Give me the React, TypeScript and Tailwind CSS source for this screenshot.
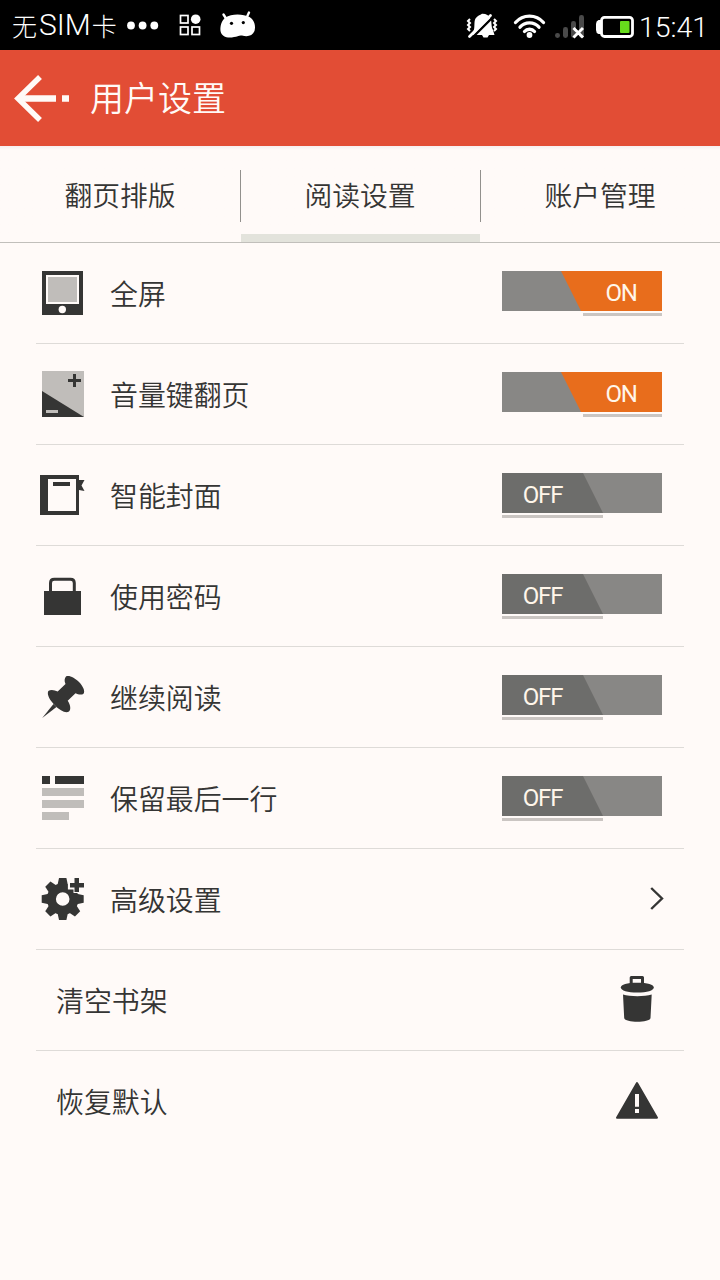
import type { ReactNode } from "react";

const DARK = "#353534";
const GREY = "#c0bdba";

function StatusBar() {
  return (
    <div className="flex h-[50px] items-center bg-black text-white">
      <div className="flex items-center pl-[12px]">
        <span className="text-[25px] leading-[48px] font-light">无</span>
        <span className="pl-[2px] font-[Roboto] text-[30px] leading-[50px] font-light">SIM</span>
        <span className="pl-px text-[25px] leading-[48px] font-light">卡</span>
      </div>
      <svg className="ml-auto h-[50px] w-[600px] shrink-0" viewBox="120 0 600 50" fill="#fff">
        <circle cx="131" cy="25.5" r="3.9" />
        <circle cx="142.6" cy="25.5" r="3.9" />
        <circle cx="154.3" cy="25.5" r="3.9" />

        {/* app grid */}
        <g fill="none" stroke="#fff" strokeWidth="1.7">
          <rect x="180.5" y="15.5" width="7.5" height="7.5" />
          <rect x="180.5" y="27" width="7.5" height="7.5" />
          <rect x="192" y="27" width="7.5" height="7.5" />
        </g>
        <circle cx="195.7" cy="19.2" r="4.8" />

        {/* android head */}
        <path d="M223.5 14.5L227 20M249 12.5L246 19" stroke="#fff" strokeWidth="2.4" strokeLinecap="round" />
        <path d="M225.5 17.5C231 13.5 243 13.5 249.5 17C254.5 20 256 26 254.5 31C252.5 36 247.5 37 242 35.5C239 35 237.5 36.5 234 37C228 38.5 221.5 37 220.5 31C220 26 221.5 20.5 225.5 17.5Z" />
        <circle cx="231.5" cy="23.3" r="1.6" fill="#000" />
        <circle cx="243.3" cy="22.6" r="1.6" fill="#000" />

        {/* muted bell */}
        <path d="M473 32C475.5 28 473.5 22 475.5 18.5C477.5 15.5 480 15 482 13.7C486 13.5 489 15.5 490.5 18.5C492 22 491 27 493 30L494.5 35H489L487.5 37.5H483.500L482 35H471Z" />
        <path d="M470.5 39.5L494.5 15.5" stroke="#000" strokeWidth="2.4" />
        <path d="M469.5 36.5L490.5 15.5" stroke="#fff" strokeWidth="2.8" strokeLinecap="round" />
        <path d="M470 19l-2 2 2 2-2 2 2 2-2 2 2 2M494 19l2 2-2 2 2 2-2 2 2 2-2 2" fill="none" stroke="#fff" strokeWidth="2" />

        {/* wifi */}
        <g fill="none" stroke="#fff" strokeWidth="3.3" strokeLinecap="round">
          <path d="M515.5 22.5C523 14 536 14 543.5 22.5" />
          <path d="M520 27.2C525 21.5 534 21.5 539 27.2" />
          <path d="M524.5 31.5C527 28.5 532 28.5 534.5 31.5" />
        </g>
        <circle cx="529.5" cy="35" r="2.9" />

        {/* signal */}
        <g fill="#4a4a4a">
          <rect x="555" y="33" width="5" height="5" rx="2.4" />
          <rect x="563" y="27" width="5" height="11" rx="2.4" />
          <rect x="571" y="21" width="5" height="17" rx="2.4" />
          <rect x="579" y="15" width="5" height="23" rx="2.4" />
        </g>
        <path d="M573.5 28L583 37.5M583 28L573.5 37.5" stroke="#fff" strokeWidth="2.9" />

        {/* battery */}
        <rect x="601.5" y="17.3" width="31" height="19.2" rx="3" fill="#000" stroke="#fff" strokeWidth="2.8" />
        <path d="M601 20H598.5Q596 21 596 24V30Q596 33 598.5 34H601Z" />
        <rect x="620" y="21" width="9.5" height="12" rx="1" fill="#67db1c" />

        <text x="639" y="37" className="font-[Roboto] text-[28.5px] font-light" textLength="69">
          15:41
        </text>
      </svg>
    </div>
  );
}

function Header() {
  return (
    <header className="flex h-[96px] items-center bg-[#e24d35] text-[#fffaf7]">
      <svg className="ml-[12px] h-[56px] w-[60px]" viewBox="12 70 60 56">
        <path d="M40 77L18 98.5L40 120" fill="none" stroke="#fffaf7" strokeWidth="5.5" />
        <path d="M18 95.2H56V101.8H18ZM62 95.2H69V101.8H62Z" fill="#fffaf7" />
      </svg>
      <h1 className="mb-[3px] ml-[18px] text-[34px] leading-[48px] font-[350]">用户设置</h1>
    </header>
  );
}

const tabs = ["翻页排版", "阅读设置", "账户管理"];

function Tabs() {
  return (
    <nav className="grid h-[97px] grid-cols-3 border-b border-[#c1bfbb] bg-gradient-to-b from-[#f6eef0] to-[#fffaf8] to-[4px]">
      {tabs.map((tab, i) => (
        <div key={tab} className="flex flex-col">
          <div
            className={`mt-[24px] flex h-[52px] items-center justify-center border-l pr-px pb-[4px] text-[27.8px] ${
              i > 0 ? "border-[#92908d]" : "border-transparent"
            }`}
          >
            <span className="leading-[48px]">{tab}</span>
          </div>
          {i === 1 && <div className="mt-auto ml-px h-[8px] bg-[#e3e3dc]" />}
        </div>
      ))}
    </nav>
  );
}

function Toggle({ on }: { on?: boolean }) {
  return (
    <div className="mt-[28px] w-[160px] self-start font-[Roboto] text-[24px] font-normal tracking-[-1.2px] text-[#fff6ea]">
      <div className="h-[40px] bg-[#888785]">
        {on ? (
          <div className="ml-auto flex h-full w-[101px] items-center justify-center bg-[#e86d1c] pt-[4px] pl-[19px] [clip-path:polygon(0_0,100%_0,100%_100%,20px_100%)]">
            ON
          </div>
        ) : (
          <div className="flex h-full w-[101px] items-center justify-center bg-[#6d6d6b] pt-[4px] pr-[20px] [clip-path:polygon(0_0,81px_0,100%_100%,0_100%)]">
            OFF
          </div>
        )}
      </div>
      <div className={on ? "mt-[2px] ml-auto h-[3px] w-[79px] bg-[#cac5c2]" : "mt-[2px] h-[3px] w-[101px] bg-[#cac5c2]"} />
    </div>
  );
}

function Icon({ children }: { children: ReactNode }) {
  return (
    <svg className="h-[52px] w-[52px] shrink-0" viewBox="0 0 52 52" fill={DARK}>
      {children}
    </svg>
  );
}

const TabletIcon = (
  <Icon>
    <path d="M6 4H47V48H6Z" />
    <path d="M10 8H43V37H10Z" fill="#fffaf8" />
    <path d="M12 10H41V35H12Z" fill={GREY} />
    <circle cx="26.3" cy="42.5" r="3.7" fill="#fffaf8" />
  </Icon>
);

const VolumeIcon = (
  <Icon>
    <path d="M6 3H48V49H6Z" fill={GREY} />
    <path d="M6 23L48 49H6Z" />
    <path d="M37 6H40V11H45V14H40V19H37V14H32V11H37Z" />
    <path d="M10 42H22V45H10Z" fill={GREY} />
  </Icon>
);

const CoverIcon = (
  <Icon>
    <path d="M4 6H43V46H4Z" />
    <path d="M12 10H40V42H12Z" fill="#fffaf8" />
    <path d="M17 13H34V17H17Z" />
    <path d="M43 11H48.5L45.5 16.5L48.5 22L43 21Z" />
  </Icon>
);

const LockIcon = (
  <Icon>
    <path d="M8 21H45V45H8Z" />
    <path d="M14.5 22V13Q14.5 9.2 18.3 9.2H34.5Q38.3 9.2 38.3 13V22" fill="none" stroke={DARK} strokeWidth="3" />
  </Icon>
);

const PinIcon = (
  <Icon>
    <path d="M6.2 47L17.5 33L20.5 36Z" />
    <path d="M12.3 20C15 18 18.500 19 21.700 20.500L29.500 13C28 10 28.500 7 30 5.500C33 3.800 39 7 43 11C47 15 49.500 20.500 47.500 22.800C45.500 24.300 42 23.500 39.500 22.300L31.700 29.700C34 33 35.500 38 33 40.500C29.500 42.500 24 39.500 19 34.500C14 29.500 10.500 23.500 12.300 20Z" />
  </Icon>
);

const LinesIcon = (
  <Icon>
    <path d="M6 4H14V12H6ZM19 4H48V12H19Z" />
    <path d="M6 16H48V24H6ZM6 28H48V36H6ZM6 40H33V48H6Z" fill={GREY} />
  </Icon>
);

const GearIcon = (
  <Icon>
    <circle cx="26.7" cy="26" r="11.3" fill="none" stroke={DARK} strokeWidth="9" />
    {[0, 90, 135, 180, 225, 270, 315].map((angle) => (
      <path key={angle} d="M21.5 12L23 5H30.400L31.900 12Z" transform={`rotate(${angle} 26.7 26)`} />
    ))}
    <path d="M31.900 3H52V20H37.500V16.500H31.900Z" fill="#fffaf8" />
    <path d="M38.500 5H43V10H48V14.500H43V19H38.500V14.500H34V10H38.500Z" />
  </Icon>
);

const ChevronIcon = (
  <Icon>
    <path d="M39.2 15L50 25.5L39.2 36" fill="none" stroke={DARK} strokeWidth="2.4" />
  </Icon>
);

const TrashIcon = (
  <Icon>
    <path d="M19.2 11V3.5H30.5V11" fill="none" stroke={DARK} strokeWidth="3" strokeLinejoin="round" />
    <path d="M8.8 13.5C8.8 10.5 15 8.8 25.3 8.8S41.8 10.5 41.8 13.5C41.8 16.5 35 18.5 25.3 18.5S8.8 16.5 8.8 13.5Z" />
    <path d="M11 20.5C18 22.8 32.5 22.8 39.7 20.5L38.5 44C37.8 49 13 49 12.2 44Z" />
  </Icon>
);

const WarningIcon = (
  <Icon>
    <path d="M25 8L45 42.7H5Z" stroke={DARK} strokeWidth="2" strokeLinejoin="round" />
    <path d="M23 19H27V31.7H23ZM23 34H27V38H23Z" fill="#fffaf8" />
  </Icon>
);

type Item = { label: string; icon?: ReactNode; right: ReactNode };

const items: Item[] = [
  { label: "全屏", icon: TabletIcon, right: <Toggle on /> },
  { label: "音量键翻页", icon: VolumeIcon, right: <Toggle on /> },
  { label: "智能封面", icon: CoverIcon, right: <Toggle /> },
  { label: "使用密码", icon: LockIcon, right: <Toggle /> },
  { label: "继续阅读", icon: PinIcon, right: <Toggle /> },
  { label: "保留最后一行", icon: LinesIcon, right: <Toggle /> },
  { label: "高级设置", icon: GearIcon, right: ChevronIcon },
  { label: "清空书架", right: TrashIcon },
  { label: "恢复默认", right: WarningIcon },
];

export default function App() {
  return (
    <div className="h-[1280px] w-[720px] overflow-hidden bg-[#fffaf8] font-['Noto_Sans_CJK_SC',sans-serif] font-[350] text-[#353534]">
      <StatusBar />
      <Header />
      <Tabs />
      <ul className="px-[36px]">
        {items.map((item) => (
          <li
            key={item.label}
            className="flex h-[101px] items-center border-b border-[#dedbd8] last:border-transparent"
          >
            {item.icon}
            <span className={`text-[27.9px] leading-[50px] ${item.icon ? "ml-[22px]" : "ml-[20px]"}`}>
              {item.label}
            </span>
            <div className={`ml-auto flex h-full items-center ${item.icon && item.right !== ChevronIcon ? "pr-[22px]" : "pr-[20px]"}`}>
              {item.right}
            </div>
          </li>
        ))}
      </ul>
    </div>
  );
}
